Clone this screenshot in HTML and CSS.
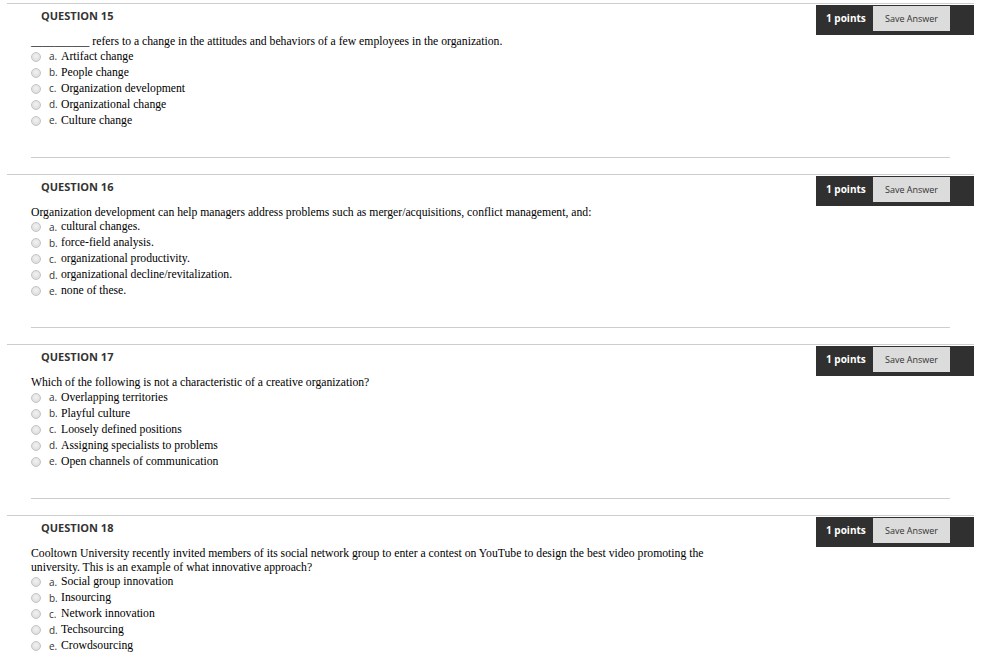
FILE: index.html
```html
<!DOCTYPE html>
<html>
<head>
<meta charset="utf-8">
<link rel="stylesheet" href="styles.css">
</head>
<body>
<div class="page">

  <div class="question">
    <div class="q-head">
      <h3 class="q-title">QUESTION 15</h3>
      <div class="q-bar"><span class="points">1 points</span><button class="save">Save Answer</button></div>
    </div>
    <div class="q-body">
      <p class="q-text">__________ refers to a change in the attitudes and behaviors of a few employees in the organization.</p>
      <ul class="options">
        <li><span class="radio"></span><span class="letter">a.</span>Artifact change</li>
        <li><span class="radio"></span><span class="letter">b.</span>People change</li>
        <li><span class="radio"></span><span class="letter">c.</span>Organization development</li>
        <li><span class="radio"></span><span class="letter">d.</span>Organizational change</li>
        <li><span class="radio"></span><span class="letter">e.</span>Culture change</li>
      </ul>
    </div>
    <div class="sep"></div>
  </div>

  <div class="question">
    <div class="q-head">
      <h3 class="q-title">QUESTION 16</h3>
      <div class="q-bar"><span class="points">1 points</span><button class="save">Save Answer</button></div>
    </div>
    <div class="q-body">
      <p class="q-text">Organization development can help managers address problems such as merger/acquisitions, conflict management, and:</p>
      <ul class="options">
        <li><span class="radio"></span><span class="letter">a.</span>cultural changes.</li>
        <li><span class="radio"></span><span class="letter">b.</span>force-field analysis.</li>
        <li><span class="radio"></span><span class="letter">c.</span>organizational productivity.</li>
        <li><span class="radio"></span><span class="letter">d.</span>organizational decline/revitalization.</li>
        <li><span class="radio"></span><span class="letter">e.</span>none of these.</li>
      </ul>
    </div>
    <div class="sep"></div>
  </div>

  <div class="question">
    <div class="q-head">
      <h3 class="q-title">QUESTION 17</h3>
      <div class="q-bar"><span class="points">1 points</span><button class="save">Save Answer</button></div>
    </div>
    <div class="q-body">
      <p class="q-text">Which of the following is not a characteristic of a creative organization?</p>
      <ul class="options">
        <li><span class="radio"></span><span class="letter">a.</span>Overlapping territories</li>
        <li><span class="radio"></span><span class="letter">b.</span>Playful culture</li>
        <li><span class="radio"></span><span class="letter">c.</span>Loosely defined positions</li>
        <li><span class="radio"></span><span class="letter">d.</span>Assigning specialists to problems</li>
        <li><span class="radio"></span><span class="letter">e.</span>Open channels of communication</li>
      </ul>
    </div>
    <div class="sep"></div>
  </div>

  <div class="question">
    <div class="q-head">
      <h3 class="q-title">QUESTION 18</h3>
      <div class="q-bar"><span class="points">1 points</span><button class="save">Save Answer</button></div>
    </div>
    <div class="q-body">
      <p class="q-text">Cooltown University recently invited members of its social network group to enter a contest on YouTube to design the best video promoting the university. This is an example of what innovative approach?</p>
      <ul class="options">
        <li><span class="radio"></span><span class="letter">a.</span>Social group innovation</li>
        <li><span class="radio"></span><span class="letter">b.</span>Insourcing</li>
        <li><span class="radio"></span><span class="letter">c.</span>Network innovation</li>
        <li><span class="radio"></span><span class="letter">d.</span>Techsourcing</li>
        <li><span class="radio"></span><span class="letter">e.</span>Crowdsourcing</li>
      </ul>
    </div>
    <div class="sep"></div>
  </div>

</div>
</body>
</html>
```

FILE: styles.css
```css
html, body {
  margin: 0;
  padding: 0;
  background: #fff;
}

.page {
  margin: 0 17px 0 7px;
  padding-top: 3px;
}

.question {
  border-top: 1px solid #cdcdcd;
  height: 169.67px;
  display: flex;
  flex-direction: column;
  overflow: visible;
}

.q-head {
  display: flex;
  justify-content: space-between;
  align-items: flex-start;
  margin-top: 1px;
}

.q-title {
  margin: 0;
  padding: 3px 0 0 34px;
  font-family: "Open Sans", sans-serif;
  font-weight: 700;
  font-size: 11px;
  line-height: 15px;
  color: #333;
}

.q-bar {
  width: 158px;
  height: 30px;
  box-sizing: border-box;
  background: #303030;
  display: flex;
  align-items: flex-start;
  padding: 1px 24px 0 10px;
  justify-content: space-between;
}

.points {
  font-family: "Open Sans", sans-serif;
  font-weight: 700;
  font-size: 10px;
  color: #fff;
  line-height: 25px;
}

.save {
  width: 77px;
  height: 25px;
  border: none;
  background: #dcdcdc;
  font-family: "Open Sans", sans-serif;
  font-size: 9px;
  color: #333;
  padding: 0;
  margin: 0;
}

.q-body {
  padding-left: 24px;
}

.q-text {
  margin: 0 0 -1px 0;
  max-width: 690px;
  font-family: "Liberation Serif", "Times New Roman", serif;
  font-size: 11.7px;
  line-height: 14px;
  color: #000;
}

.options {
  list-style: none;
  margin: 0;
  padding: 0;
}

.options li {
  display: flex;
  align-items: center;
  height: 16px;
  font-family: "Liberation Serif", "Times New Roman", serif;
  font-size: 11.7px;
  color: #000;
}

.radio {
  width: 10px;
  height: 10px;
  box-sizing: border-box;
  border-radius: 50%;
  border: 1px solid #c4c4c4;
  background: radial-gradient(circle at 50% 40%, #f2f2f2 0%, #e2e2e2 60%, #d4d4d4 100%);
  margin: 1px 8px 0 0;
  flex: none;
}

.letter {
  width: 12px;
  font-family: "Open Sans", sans-serif;
  font-size: 10px;
  color: #333;
  flex: none;
}

.sep {
  margin: auto 24px 16px 24px;
  height: 1px;
  background: #cdcdcd;
  flex: none;
}
```
